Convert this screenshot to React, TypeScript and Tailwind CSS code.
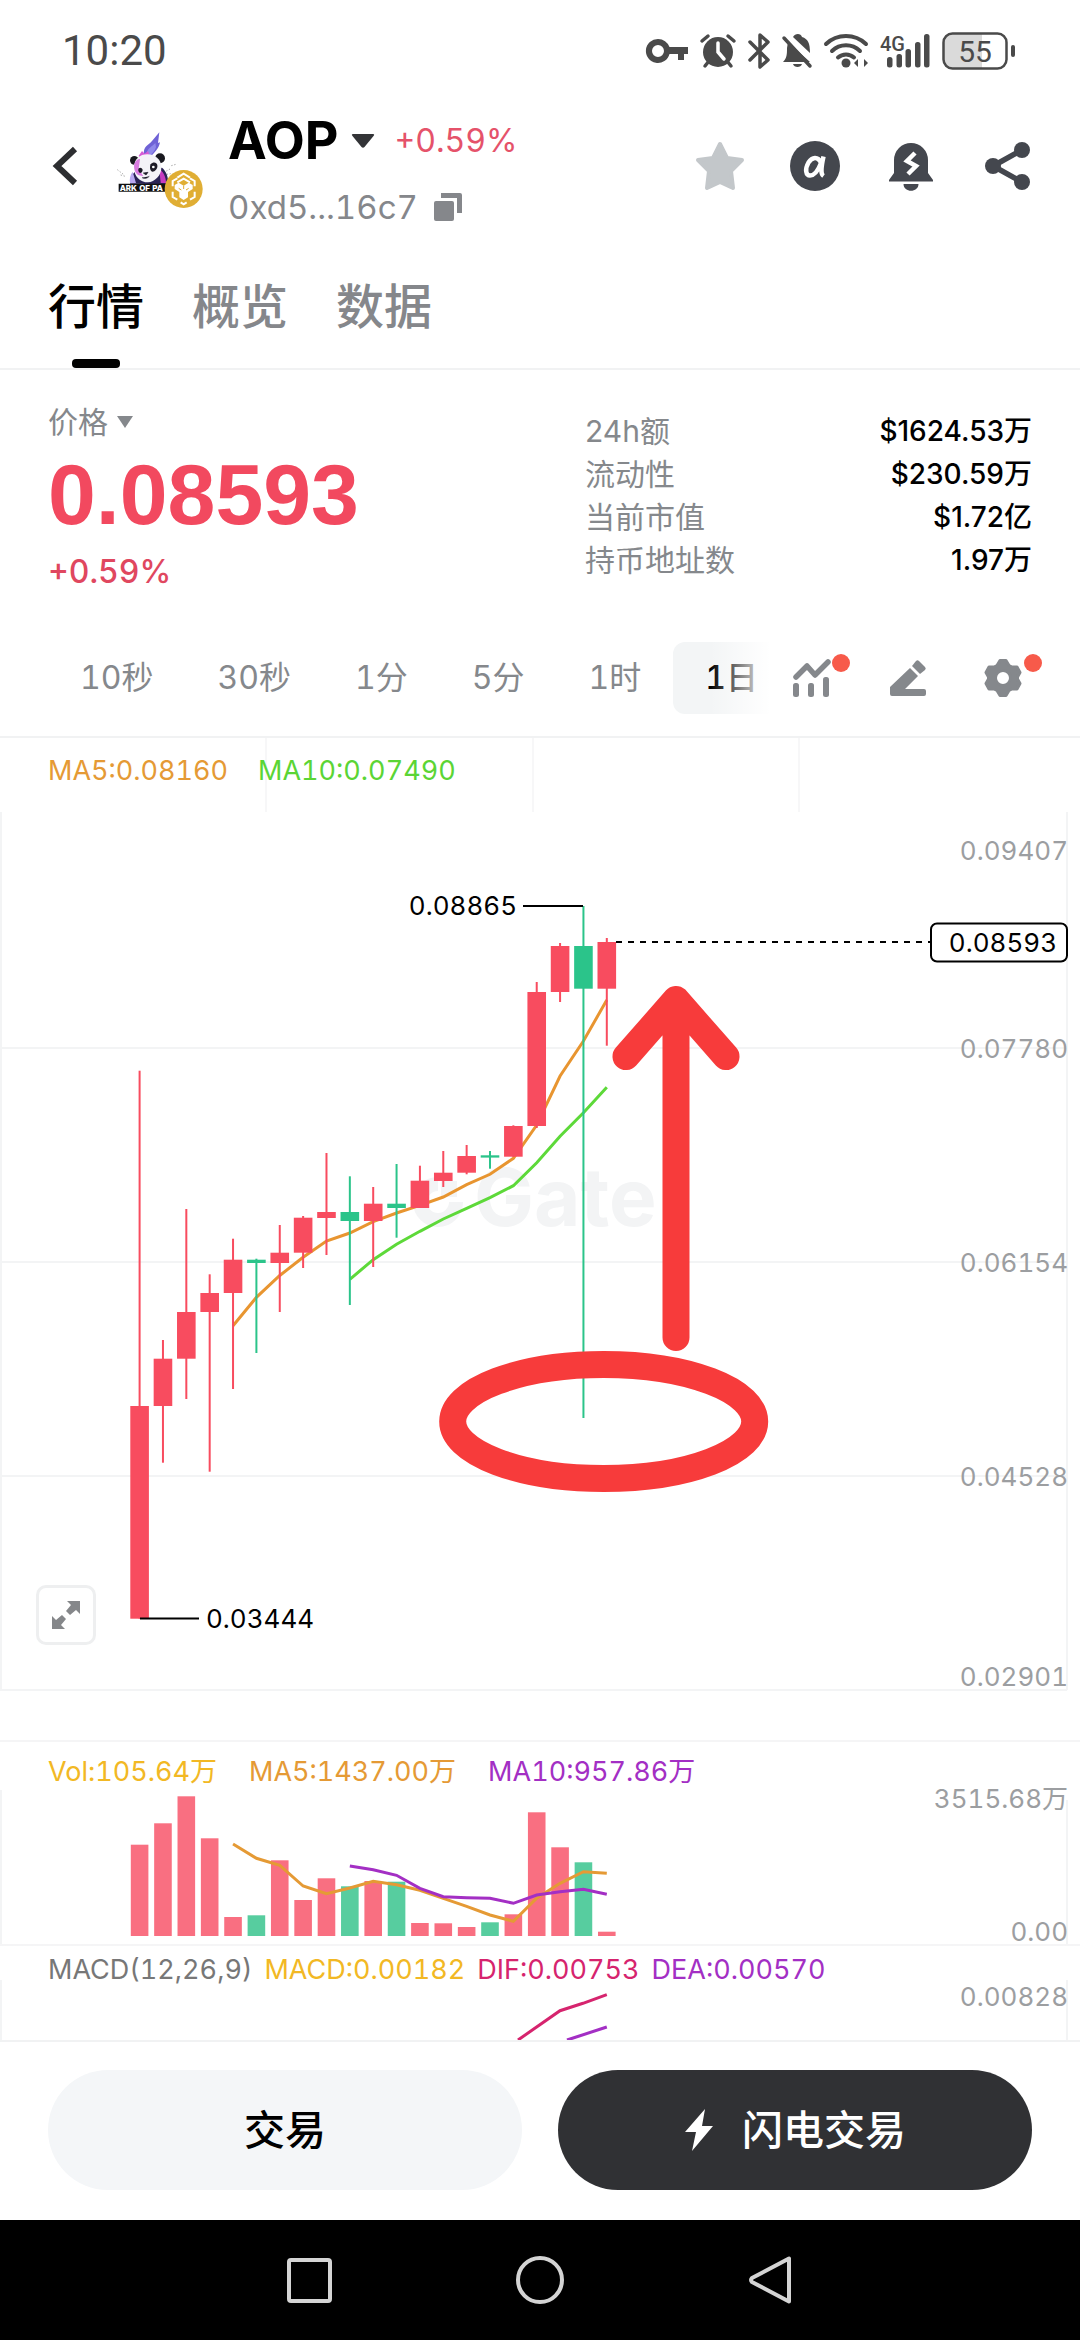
import React from 'react';

type Point = [number, number];

interface Candle {
  high: number;
  top: number;
  bottom: number;
  low: number;
  down?: boolean;
}

const UP = '#f84c5f';
const DOWN = '#2bc48a';
const FONT = "Inter, 'Noto Sans CJK SC', sans-serif";

// x centre of the n-th candle, shared by all three panels
const cx = (i: number) => 139.6 + 23.36 * i;

const candles: Candle[] = [
  { high: 1070.7, top: 1406, bottom: 1618.7, low: 1618.7 },
  { high: 1340, top: 1358.7, bottom: 1406, low: 1462.7 },
  { high: 1209, top: 1312, bottom: 1358.7, low: 1399 },
  { high: 1274.3, top: 1293, bottom: 1312, low: 1471.7 },
  { high: 1238.7, top: 1259.7, bottom: 1293, low: 1389 },
  { high: 1258.7, top: 1259.7, bottom: 1263, low: 1353, down: true },
  { high: 1225, top: 1252.7, bottom: 1263, low: 1312 },
  { high: 1216, top: 1217.7, bottom: 1252.7, low: 1268 },
  { high: 1153, top: 1212, bottom: 1218, low: 1255 },
  { high: 1176.3, top: 1212, bottom: 1221, low: 1305, down: true },
  { high: 1187, top: 1203.7, bottom: 1221, low: 1267 },
  { high: 1164, top: 1203.7, bottom: 1208, low: 1237.7, down: true },
  { high: 1165.7, top: 1180.7, bottom: 1208, low: 1208 },
  { high: 1151, top: 1172.7, bottom: 1181, low: 1187 },
  { high: 1145, top: 1156, bottom: 1172.7, low: 1174.3 },
  { high: 1151, top: 1155.3, bottom: 1157.6, low: 1168.7, down: true },
  { high: 1125.3, top: 1126, bottom: 1156.7, low: 1157 },
  { high: 982, top: 992, bottom: 1126, low: 1128 },
  { high: 943, top: 946, bottom: 992, low: 1002 },
  { high: 906, top: 946, bottom: 988.7, low: 1418, down: true },
  { high: 938, top: 942, bottom: 988.7, low: 1045.7 },
];

const priceMa5 = [
  1325.7, 1297.3, 1275.5, 1257.3, 1241, 1233, 1221.7, 1213, 1205.3, 1197, 1184.7, 1174.3, 1158.3, 1125, 1076, 1041, 1000,
];
const priceMa10 = [1279.3, 1259.7, 1244.3, 1231.3, 1219, 1208.3, 1197.7, 1185.7, 1162.7, 1136.3, 1112.7, 1087.3];

const volumes = [
  1844.7, 1823.3, 1796.3, 1838.3, 1917, 1915.3, 1860.3, 1900, 1878.3, 1886.3, 1881, 1881.7, 1923, 1923.3, 1927, 1922.3,
  1914.3, 1812.3, 1847.3, 1862.3, 1931.7,
];
const volMa5 = [
  1844, 1858.3, 1865.3, 1886, 1893.7, 1888, 1881.3, 1884.7, 1890.3, 1898.3, 1906.3, 1915, 1921.3, 1898.3, 1883.3, 1871.7,
  1873.3,
];
const volMa10 = [1866, 1869.7, 1875.3, 1888.3, 1896.7, 1897.7, 1898.3, 1903.3, 1895, 1891.7, 1889.3, 1894.3];

const series = (ys: number[], start: number) => ys.map((y, i) => `${cx(start + i)},${y}`).join(' ');
const path = (pts: Point[]) => pts.map((p) => p.join(',')).join(' ');

const stats = [
  { label: '24h额', value: '$1624.53万' },
  { label: '流动性', value: '$230.59万' },
  { label: '当前市值', value: '$1.72亿' },
  { label: '持币地址数', value: '1.97万' },
];

const priceAxis = [
  { y: 850, label: '0.09407' },
  { y: 1048, label: '0.07780' },
  { y: 1262, label: '0.06154' },
  { y: 1476, label: '0.04528' },
  { y: 1676, label: '0.02901' },
];

const AxisLabel: React.FC<{ y: number; children: string }> = ({ y, children }) => (
  <text x="1068" y={y + 10} textAnchor="end" fontSize="26" fill="#9c9ea1" fontFamily={FONT}>
    {children}
  </text>
);

const StatusBar = () => (
  <div className="flex h-[102px] items-center justify-between pl-[62px] pr-[64px] text-[#4a4a4a]">
    <span className="font-[Roboto] text-[42px] leading-[48px]">10:20</span>
    <svg className="overflow-visible" width="370" height="40" viewBox="646 31 370 40" fill="#4a4a4a" aria-label="Status icons">
      {/* vpn key */}
      <path
        fillRule="evenodd"
        d="M658 39a12 12 0 1 0 11.500 15h8.500v6h6v-6h4v-7h-18.500A12 12 0 0 0 658 39zM658 45a6 6 0 1 1 0 12a6 6 0 0 1 0-12z"
      />
      {/* alarm */}
      <circle cx="718" cy="52" r="15" />
      <path d="M702 41l6-5M734 41l-6-5M709 61l-4 5M727 61l4 5" stroke="#4a4a4a" strokeWidth="3.500" strokeLinecap="round" />
      <path d="M718 43v9l6 7" stroke="#fff" strokeWidth="3.500" fill="none" strokeLinecap="round" />
      {/* bluetooth */}
      <path
        d="M750 42l18 18l-8 7v-32l8 7l-18 18"
        fill="none"
        stroke="#4a4a4a"
        strokeWidth="3.500"
        strokeLinejoin="round"
        strokeLinecap="round"
      />
      {/* muted bell */}
      <path d="M793 37c2-4 8-4 9 0c6 2 8 6 8 16zM788 42l22 20h-27c4-4 4-8 4-14zM793 64h9c-1 4-8 4-9 0z" />
      <path d="M784 38l26 28" stroke="#4a4a4a" strokeWidth="3.500" strokeLinecap="round" />
      {/* wifi */}
      <g fill="none" stroke="#4a4a4a" strokeWidth="4" strokeLinecap="round">
        <path d="M826 44a29 29 0 0 1 40 0" />
        <path d="M832 51a20 20 0 0 1 28 0" />
        <path d="M838 57.500a12 12 0 0 1 16 0" />
      </g>
      <circle cx="846" cy="63" r="4.500" />
      <path d="M854 63l4-4v8zM864 59v8l4-4z" />
      {/* signal */}
      <text x="880" y="51" fontSize="20" fontWeight="500" fontFamily="Roboto, sans-serif">
        4G
      </text>
      <rect x="887" y="57" width="5.500" height="10.500" rx="2.500" />
      <rect x="896.500" y="54" width="5.500" height="13.500" rx="2.500" />
      <rect x="905.500" y="49" width="5.500" height="18.500" rx="2.500" />
      <rect x="915" y="42" width="5.500" height="25.500" rx="2.500" />
      <rect x="924" y="34" width="5.500" height="33.500" rx="2.500" />
      {/* battery */}
      <path d="M952 33h30v35h-30a8 8 0 0 1-8-8v-19a8 8 0 0 1 8-8z" fill="#dadada" />
      <rect x="943.500" y="33.500" width="63" height="35" rx="9" fill="none" stroke="#4a4a4a" strokeWidth="2.500" />
      <rect x="1011" y="45" width="4" height="12" rx="2" />
      <text x="975" y="62" fontSize="30" textAnchor="middle" fontFamily="Roboto, sans-serif">
        55
      </text>
    </svg>
  </div>
);

const TokenLogo = () => (
  <svg width="90" height="84" viewBox="20 -3 270 252" aria-label="AOP">
    <path d="M104 92c-4-30 14-30 24-44l22-26l-4 32l6-2c-4 22-18 30-26 42z" fill="#6f62d6" />
    <path d="M112 88c2-20 16-22 26-34l2 12c-4 14-12 18-16 26z" fill="#9089ea" />
    <path d="M88 92l10-14l8 8l10-8l6 18l-30 10z" fill="#d65bd6" />
    <path d="M24 134l18 14M34 150l14 4M182 132l-14 8M186 122l14-4M172 148l12-2" stroke="#777" strokeWidth="2" strokeDasharray="4 5" />
    <path d="M62 176c0-20 8-30 18-38l78-10c12 10 20 28 18 50z" fill="#2a2355" />
    <path d="M150 132c12 8 20 24 20 42h-16z" fill="#c63cc0" />
    <path d="M70 140c-8 10-10 22-8 34h18z" fill="#b8a8f0" />
    <circle cx="75" cy="106" r="13" fill="#19191f" />
    <circle cx="152" cy="100" r="15" fill="#19191f" />
    <path d="M74 128c0-26 18-40 40-40s42 14 42 40c0 24-20 42-40 44c-24 0-42-18-42-44z" fill="#f4f3f8" />
    <path d="M74 122c4-16 12-20 18-20l-4 30l14 22l-16-4c-8-6-12-16-12-28z" fill="#d97be0" />
    <path d="M124 118c6-8 18-8 20 2c2 12-8 20-14 20c-8 0-10-14-6-22z" fill="#1d1b28" />
    <path d="M88 130c4-4 10-2 12 4c0 6-4 10-8 10c-6-2-6-10-4-14z" fill="#1d1b28" />
    <circle cx="132" cy="126" r="4" fill="#fff" />
    <path d="M102 144l14-2l-6 8zM98 158c8 4 16 2 22-4" fill="#1d1b28" stroke="#1d1b28" strokeWidth="2" />
    <path d="M28 176h150v24h-150z" fill="#111" />
    <text x="31" y="197" fontSize="24" fontWeight="800" fill="#fff" fontFamily={FONT}>
      ARK OF PA
    </text>
    <circle cx="223" cy="192" r="57" fill="#e0ae34" />
    {/* BNB chain badge */}
    <g fill="none" stroke="#fff" strokeWidth="6">
      <path d="M204 158l19-12l19 12M190 184v-16l14-8M256 184v-16l-14-8M190 200v16l14 8M256 200v16l-14 8" />
      <path d="M204 172l19-11l19 11M214 232l9 6l9-6" />
    </g>
    <path d="M196 180l12-7l15 9l15-9l12 7v12l-14 9v16l-13 8l-13-8v-16l-14-9z" fill="#fff" />
    <path d="M223 182v10M208 190l8 5M238 190l-8 5" stroke="#e0ae34" strokeWidth="3" />
  </svg>
);

const Header = () => (
  <header className="flex h-[128px] items-center pl-[50px] pr-12">
    <button aria-label="返回" className="mr-[38px]">
      <svg width="28" height="42" viewBox="0 0 28 42">
        <path d="M25 4L7 21l18 17" fill="none" stroke="#2d2e31" strokeWidth="6" />
      </svg>
    </button>
    <TokenLogo />
    <div className="ml-[22px] pt-[10px]">
      <div className="flex items-center">
        <h1 className="text-[52px] font-bold leading-[52px] text-black">AOP</h1>
        <button aria-label="切换代币" className="ml-[13px]">
          <svg width="24" height="16" viewBox="0 0 24 16">
            <path d="M2 1h20q2 0 .5 2l-9 11q-1.500 1.500-3 0l-9-11q-1.500-2 .5-2z" fill="#333437" />
          </svg>
        </button>
        <span className="ml-[19px] text-[32px] leading-[40px] text-[#e5526a]">+0.59%</span>
      </div>
      <div className="mt-5 flex items-center text-[33px] leading-[40px] text-[#85878b]">
        <span>0xd5...16c7</span>
        <button aria-label="复制地址" className="ml-4">
          <svg width="28" height="28" viewBox="0 0 28 28" fill="#85878b">
            <rect y="8" width="20" height="20" rx="2" />
            <path d="M7 0h19a2 2 0 0 1 2 2v18h-5V5H7z" />
          </svg>
        </button>
      </div>
    </div>
    <div className="ml-auto flex items-center">
      <button aria-label="收藏" className="mr-[44px]">
        <svg width="52" height="52" viewBox="0 0 52 52">
          <path
            d="M26 4l7 14l15 2l-11 11l2 17l-13-6l-13 6l2-17L4 20l15-2z"
            fill="#c3c7ca"
            stroke="#c3c7ca"
            strokeWidth="4"
            strokeLinejoin="round"
          />
        </svg>
      </button>
      <button
        aria-label="Alpha"
        className="mr-12 flex h-[50px] w-[50px] items-center justify-center rounded-full bg-[#44474e]"
      >
        <svg width="50" height="50" viewBox="0 0 50 50">
          <path
            d="M33.500 15.500C31 27 30.500 33 33.500 35M31 22c-3-7-9-6-12.500-.5c-4 7-2.500 13 1.500 13c5 0 8.500-6 11-12.500"
            fill="none"
            stroke="#fff"
            strokeWidth="4.500"
          />
        </svg>
      </button>
      <button aria-label="价格提醒" className="mr-[50px]">
        <svg width="46" height="50" viewBox="0 0 46 50" fill="#44474e">
          <path d="M6 19a17 17 0 0 1 34 0v13l5 7v1.500H1V39l5-7z" />
          <path d="M15.500 43h15c0 9-15 9-15 0z" />
          <path d="M27 12l-8 8l9 5l-8 8" fill="none" stroke="#fff" strokeWidth="4.500" />
        </svg>
      </button>
      <button aria-label="分享">
        <svg width="48" height="50" viewBox="0 0 48 50" fill="#44474e">
          <path d="M38 9L9 25l29 16" fill="none" stroke="#44474e" strokeWidth="5.500" />
          <circle cx="9" cy="25" r="8" />
          <circle cx="38" cy="9" r="8" />
          <circle cx="38" cy="41" r="8" />
        </svg>
      </button>
    </div>
  </header>
);

const Tabs = () => (
  <nav className="flex h-[140px] items-end gap-12 border-b-2 border-[#f1f2f3] px-12 text-[48px] font-medium leading-[48px]">
    <button className="flex flex-col items-center gap-7 text-black">
      行情
      <span className="h-[9px] w-12 rounded-[4px] bg-black" />
    </button>
    <button className="pb-[37px] text-[#85878b]">概览</button>
    <button className="pb-[37px] text-[#85878b]">数据</button>
  </nav>
);

const PriceSummary = () => (
  <section className="flex h-[250px] justify-between px-12 pt-8">
    <div>
      <button className="flex items-center gap-2 text-[30px] leading-[40px] text-[#85888c]">
        价格
        <svg width="18" height="12" viewBox="0 0 18 12">
          <path d="M1 0h16L9 12z" fill="#85888c" />
        </svg>
      </button>
      <p className="mt-2 font-['Liberation_Sans'] text-[86px] font-bold leading-[88px] text-[#f2495f]">0.08593</p>
      <p className="mt-3.5 text-[32px] font-medium leading-[40px] text-[#e0475f]">+0.59%</p>
    </div>
    <dl className="mt-2 w-[447px] text-[30px] leading-[43px]">
      {stats.map((s) => (
        <div key={s.label} className="flex justify-between">
          <dt className="proportional-nums text-[#85888c]">{s.label}</dt>
          <dd className="text-[28px] font-medium proportional-nums text-black">{s.value}</dd>
        </div>
      ))}
    </dl>
  </section>
);

const TimeframeBar = () => (
  <div className="flex h-[118px] items-center border-b-2 border-[#f1f2f3] pl-12 pr-[58px]">
    <div className="relative mr-[22px] flex h-[72px] min-w-0 flex-1 overflow-hidden text-[32px] leading-[72px] text-[#85888c]">
      <button className="shrink-0 px-8">10秒</button>
      <button className="shrink-0 px-8">30秒</button>
      <button className="shrink-0 px-8">1分</button>
      <button className="shrink-0 px-8">5分</button>
      <button className="shrink-0 px-8">1时</button>
      <button className="shrink-0 rounded-xl bg-[#f3f5f6] px-8 font-medium text-black">1日</button>
      <span className="absolute right-0 top-0 h-full w-[60px] bg-gradient-to-r from-transparent to-white" />
    </div>
    <div className="flex items-center gap-[57px]">
      <button aria-label="指标" className="relative">
        <svg width="40" height="40" viewBox="0 0 40 40" fill="#85888c">
          <path d="M4 19l11-11l8 9L36 4" fill="none" stroke="#85888c" strokeWidth="5.500" strokeLinecap="round" strokeLinejoin="round" />
          <rect x="1" y="25" width="6" height="14" rx="2.500" />
          <rect x="16" y="25" width="6" height="14" rx="2.500" />
          <rect x="31" y="19" width="6" height="20" rx="2.500" />
        </svg>
        <span className="absolute -right-[18px] -top-1 h-[18px] w-[18px] rounded-full bg-[#f75a4a]" />
      </button>
      <button aria-label="画线">
        <svg width="38" height="38" viewBox="0 0 38 38" fill="#85888c">
          <path d="M21 9l8 8L16 30h19a2 2 0 0 1 2 2v3a2 2 0 0 1-2 2H3a2 2 0 0 1-2-2v-7z" />
          <path d="M23 7l4-5q1.500-1.500 3 0l6 6q1.500 1.500 0 3l-5 4z" />
        </svg>
      </button>
      <button aria-label="设置" className="relative">
        <svg width="38" height="40" viewBox="0 0 38 40">
          <path
            fillRule="evenodd"
            fill="#85888c"
            stroke="#85888c"
            strokeWidth="3"
            strokeLinejoin="round"
            d="M16 2.500h6l3 5l3 1.500h5l3 5.500l-2.500 4.500v2l2.500 4.500l-3 5.500h-5l-3 1.500l-3 5h-6l-3-5l-3-1.500h-5l-3-5.500l2.500-4.500v-2L2 14.500L5 9h5l3-1.500zM19 12.500a7.500 7.500 0 1 0 0 15a7.500 7.500 0 1 0 0-15z"
          />
        </svg>
        <span className="absolute -right-5 -top-1 h-[18px] w-[18px] rounded-full bg-[#f75a4a]" />
      </button>
    </div>
  </div>
);

const PriceChart = () => (
  <section className="relative">
    <div className="relative flex h-[74px] items-center gap-[30px] px-12 pb-2 text-[27px] leading-[32px]">
      <div className="absolute inset-y-0 left-0 right-[13px] grid grid-cols-4">
        <span className="border-r-2 border-[#f7f7f8]" />
        <span className="border-r-2 border-[#f7f7f8]" />
        <span className="border-r-2 border-[#f7f7f8]" />
      </div>
      <span className="relative text-[#e59a35]">MA5:0.08160</span>
      <span className="relative text-[#5bd535]">MA10:0.07490</span>
    </div>
    <svg className="block h-auto w-full" viewBox="0 812 1080 928">
      {/* watermark */}
      <text x="474" y="1226" fontSize="80" fontWeight="700" fill="#f3f4f5" fontFamily={FONT}>
        Gate
      </text>
      <path d="M438 1184a18 18 0 1 0 18 18" fill="none" stroke="#f3f4f5" strokeWidth="14" />
      <rect x="441" y="1181" width="16" height="16" fill="#f3f4f5" />

      <g stroke="#f3f4f5" strokeWidth="2">
        {[1048, 1262, 1476, 1690].map((y) => (
          <line key={y} x1="0" x2="1067" y1={y} y2={y} />
        ))}
        <line x1="1" x2="1" y1="812" y2="1690" />
        <line x1="1067" x2="1067" y1="812" y2="1690" />
      </g>
      {priceAxis.map((a) => (
        <AxisLabel key={a.label} y={a.y}>
          {a.label}
        </AxisLabel>
      ))}

      {/* averages sit behind the bodies, as the wicks do */}
      <polyline points={series(priceMa5, 4)} fill="none" stroke="#e89530" strokeWidth="3" />
      <polyline points={series(priceMa10, 9)} fill="none" stroke="#5dd939" strokeWidth="3" />
      {candles.map((c, i) => (
        <g key={i} fill={c.down ? DOWN : UP}>
          <rect x={cx(i) - 1} y={c.high} width="2" height={c.low - c.high} />
          <rect x={cx(i) - 9.3} y={c.top} width="18.600" height={c.bottom - c.top} />
        </g>
      ))}

      <g fontSize="26" fill="#000" fontFamily={FONT}>
        <path d="M523 906h60M140 1618.500h59" stroke="#000" strokeWidth="2" />
        <text x="517" y="915" textAnchor="end">
          0.08865
        </text>
        <text x="206" y="1628">0.03444</text>
        <path d="M616 942h314" stroke="#000" strokeWidth="2" strokeDasharray="6 6" />
        <rect x="931" y="923.500" width="136" height="38" rx="6" fill="#fff" stroke="#000" strokeWidth="2" />
        <text x="1057" y="952" textAnchor="end">
          0.08593
        </text>
      </g>

      <g fill="none" stroke="#f73b3b" strokeWidth="27" strokeLinecap="round" strokeLinejoin="round">
        <path d="M626 1056.500l50-57l50 57M676 1000v337.500" />
        <ellipse cx="603.700" cy="1421.500" rx="151" ry="57" />
      </g>
    </svg>
    <button
      aria-label="全屏"
      className="absolute bottom-[95px] left-9 flex h-[60px] w-[60px] items-center justify-center rounded-[10px] border-[3px] border-[#eeeff0] bg-white"
    >
      <svg width="28" height="28" viewBox="0 0 28 28" fill="#85878a">
        <path d="M15 0h13v13l-4-4l-6 5l-4-4l5-6zM0 15l4 4l6-5l4 4l-5 6l4 4H0z" />
      </svg>
    </button>
  </section>
);

const VolumeChart = () => (
  <section className="border-t-2 border-[#f5f5f6]">
    <div className="flex h-12 items-end gap-8 px-12 pb-0.5 text-[27px] leading-[32px]">
      <span className="text-[#f2b824]">Vol:105.64万</span>
      <span className="text-[#e59a35]">MA5:1437.00万</span>
      <span className="text-[#a32fc4]">MA10:957.86万</span>
    </div>
    <svg className="block h-auto w-full overflow-visible" viewBox="0 1790 1080 154">
      <path d="M1 1790v154M1067 1800v144" stroke="#f3f4f5" strokeWidth="2" />
      {volumes.map((y, i) => (
        <rect key={i} x={cx(i) - 8.8} y={y} width="17.600" height={1936 - y} fill={candles[i].down ? '#57cd9f' : '#f96f81'} />
      ))}
      <polyline points={series(volMa5, 4)} fill="none" stroke="#e59a35" strokeWidth="3" />
      <polyline points={series(volMa10, 9)} fill="none" stroke="#a32fc4" strokeWidth="3" />
      <AxisLabel y={1798}>3515.68万</AxisLabel>
      <AxisLabel y={1931}>0.00</AxisLabel>
    </svg>
  </section>
);

const MacdChart = () => (
  <section className="border-t-2 border-[#f5f5f6]">
    <div className="flex h-12 items-center gap-3 px-12 text-[27px] leading-[32px]">
      <span className="text-[#777]">MACD(12,26,9)</span>
      <span className="text-[#f2b824]">MACD:0.00182</span>
      <span className="text-[#d6246e]">DIF:0.00753</span>
      <span className="text-[#a32fc4]">DEA:0.00570</span>
    </div>
    <svg className="block h-auto w-full overflow-visible" viewBox="0 1994 1080 46">
      <path d="M1 1980v60M1067 1980v60" stroke="#f3f4f5" strokeWidth="2" />
      <polyline
        points={path([[518, 2040], [560, 2010.7], [583, 2003.3], [606.8, 1994.7]])}
        fill="none"
        stroke="#d6246e"
        strokeWidth="3"
      />
      <polyline points={path([[567, 2040], [606.8, 2027]])} fill="none" stroke="#a32fc4" strokeWidth="3" />
      <AxisLabel y={1996}>0.00828</AxisLabel>
    </svg>
  </section>
);

const ActionBar = () => (
  <div className="relative flex gap-9 border-t-2 border-[#f1f2f3] bg-white px-12 pb-[30px] pt-7 text-[41px] font-medium leading-[48px]">
    <button className="h-[120px] flex-1 rounded-full bg-[#f4f6f8] text-black">交易</button>
    <button className="flex h-[120px] flex-1 items-center justify-center gap-7 rounded-full bg-[#303134] text-white">
      <svg width="30" height="42" viewBox="0 0 30 42" fill="#fff">
        <path d="M21 0L1 23h11L8 42L29 17H18z" />
      </svg>
      闪电交易
    </button>
  </div>
);

const SystemNav = () => (
  <nav className="flex h-[120px] items-center justify-center gap-[181px] bg-black">
    <button aria-label="最近任务">
      <svg width="50" height="50" viewBox="0 0 50 50">
        <rect x="5" y="5" width="41" height="41" rx="2" fill="none" stroke="#d4d4d4" strokeWidth="4" />
      </svg>
    </button>
    <button aria-label="主屏幕">
      <svg width="50" height="50" viewBox="0 0 50 50">
        <circle cx="25" cy="25" r="22" fill="none" stroke="#d4d4d4" strokeWidth="4" />
      </svg>
    </button>
    <button aria-label="返回上一页">
      <svg width="50" height="50" viewBox="0 0 50 50">
        <path d="M43 3.500v43L6 27q-2-2 0-4z" fill="none" stroke="#d4d4d4" strokeWidth="4" strokeLinejoin="round" />
      </svg>
    </button>
  </nav>
);

const App: React.FC = () => {
  return (
    <main className="min-h-screen w-full overflow-hidden bg-white font-[Inter,'Noto_Sans_CJK_SC',sans-serif] tabular-nums">
      <StatusBar />
      <Header />
      <Tabs />
      <PriceSummary />
      <TimeframeBar />
      <PriceChart />
      <VolumeChart />
      <MacdChart />
      <ActionBar />
      <SystemNav />
    </main>
  );
};

export default App;
